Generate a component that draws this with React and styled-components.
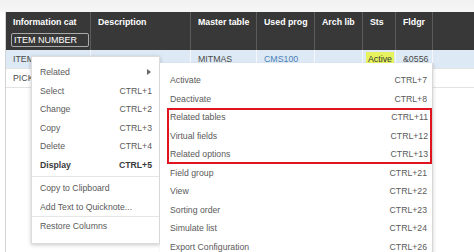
import styled, { createGlobalStyle } from 'styled-components';

const GlobalStyle = createGlobalStyle`
  html, body {
    margin: 0;
    padding: 0;
    background: #fff;
    font-family: "Liberation Sans", Arial, sans-serif;
    overflow: hidden;
  }
`;

const columns = [
  { title: 'Information cat', width: 85 },
  { title: 'Description', width: 100 },
  { title: 'Master table', width: 66 },
  { title: 'Used prog', width: 58 },
  { title: 'Arch lib', width: 48 },
  { title: 'Sts', width: 33 },
  { title: 'Fldgr', width: 37 },
  { title: '', width: null },
];

const gridTemplate = columns.map((c) => (c.width ? `${c.width}px` : '1fr')).join(' ');

const mainMenu = [
  { label: 'Related', sub: true },
  { label: 'Select', key: 'CTRL+1' },
  { label: 'Change', key: 'CTRL+2' },
  { label: 'Copy', key: 'CTRL+3' },
  { label: 'Delete', key: 'CTRL+4' },
  { label: 'Display', key: 'CTRL+5', bold: true },
];

const subBefore = [
  { label: 'Activate', key: 'CTRL+7' },
  { label: 'Deactivate', key: 'CTRL+8' },
];
const subMarked = [
  { label: 'Related tables', key: 'CTRL+11' },
  { label: 'Virtual fields', key: 'CTRL+12' },
  { label: 'Related options', key: 'CTRL+13' },
];
const subAfter = [
  { label: 'Field group', key: 'CTRL+21' },
  { label: 'View', key: 'CTRL+22' },
  { label: 'Sorting order', key: 'CTRL+23' },
  { label: 'Simulate list', key: 'CTRL+24' },
  { label: 'Export Configuration', key: 'CTRL+26' },
];

const App = () => {
  return (
    <>
      <GlobalStyle />
      <Page>
        <Frame>
          <HeaderRow>
            {columns.map((c, i) => (
              <HeadCell key={i}>
                {c.title}
                {i === 0 && <FilterBox>ITEM NUMBER</FilterBox>}
              </HeadCell>
            ))}
          </HeaderRow>
          <Row $tint>
            <Cell>ITEM</Cell>
            <Cell />
            <Cell>MITMAS</Cell>
            <Cell $link>CMS100</Cell>
            <Cell />
            <Cell>
              <Badge>Active</Badge>
            </Cell>
            <Cell>&amp;0556</Cell>
            <Cell />
          </Row>
          <Row>
            <Cell>PICK</Cell>
            <Cell />
            <Cell />
            <Cell />
            <Cell />
            <Cell />
            <Cell />
            <Cell />
          </Row>
        </Frame>

        <ContextMenu>
          {mainMenu.map((m) => (
            <MenuItem key={m.label} $bold={m.bold}>
              <span>{m.label}</span>
              {m.sub ? <Arrow /> : <span>{m.key}</span>}
            </MenuItem>
          ))}
          <Divider />
          <MenuItem>
            <span>Copy to Clipboard</span>
          </MenuItem>
          <MenuItem>
            <span>Add Text to Quicknote...</span>
          </MenuItem>
          <MenuItem $ruled>
            <span>Restore Columns</span>
          </MenuItem>
        </ContextMenu>

        <SubMenu>
          {subBefore.map((m) => (
            <SubItem key={m.label}>
              <span>{m.label}</span>
              <span>{m.key}</span>
            </SubItem>
          ))}
          <Marked>
            {subMarked.map((m) => (
              <SubItem key={m.label} $inset>
                <span>{m.label}</span>
                <span>{m.key}</span>
              </SubItem>
            ))}
          </Marked>
          {subAfter.map((m) => (
            <SubItem key={m.label}>
              <span>{m.label}</span>
              <span>{m.key}</span>
            </SubItem>
          ))}
        </SubMenu>
      </Page>
    </>
  );
};

export default App;

const Page = styled.div`
  position: relative;
  width: 474px;
  height: 252px;
  overflow: hidden;
  padding: 12px 0 0 5px;
  box-sizing: border-box;
  background: linear-gradient(#f1f1f1, #f6f6f6 12px, #fff 12px);
`;

const Frame = styled.div`
  border-left: 1px solid #d2d2d2;
  height: 100%;
  background: #fff;
`;

const HeaderRow = styled.div`
  display: grid;
  grid-template-columns: ${gridTemplate};
  height: 38px;
  background: #383838;
`;

const HeadCell = styled.div`
  border-right: 1px solid #5a5a5a;
  padding: 5px 0 0 7px;
  color: #fff;
  font-weight: bold;
  font-size: 8.8px;
  line-height: 11px;
  white-space: nowrap;
  &:last-child {
    border-right: none;
  }
`;

const FilterBox = styled.div`
  margin: 5px 0 0 -2px;
  width: 74px;
  height: 12px;
  border: 1px solid #a9a9a9;
  border-radius: 2px;
  color: #fff;
  font-weight: normal;
  font-size: 9px;
  line-height: 12px;
  padding-left: 2px;
`;

const Row = styled.div`
  display: grid;
  grid-template-columns: ${gridTemplate};
  height: 18px;
  background: ${({ $tint }) => ($tint ? '#dde9f4' : '#fff')};
  border-bottom: 1px solid #e3e3e3;
`;

const Cell = styled.div`
  border-right: 1px solid #f4f8fc;
  padding-left: 7px;
  font-size: 8.8px;
  line-height: 18px;
  color: ${({ $link }) => ($link ? '#4a7fbb' : '#4a4a4a')};
  white-space: nowrap;
  &:last-child {
    border-right: none;
  }
`;

const Badge = styled.span`
  display: inline-block;
  margin-left: -4px;
  padding: 0 2px;
  line-height: 14px;
  background: #e6f35e;
  color: #333;
`;

const ContextMenu = styled.div`
  position: absolute;
  left: 31px;
  top: 56px;
  width: 129px;
  padding: 6px 0 7px;
  box-sizing: border-box;
  background: #fff;
  border: 1px solid #dcdcdc;
  box-shadow: 0 1px 4px rgba(0, 0, 0, 0.22);
  z-index: 2;
`;

const MenuItem = styled.div`
  display: flex;
  justify-content: space-between;
  align-items: center;
  height: 18.5px;
  padding: 0 7px 0 8px;
  font-size: 8.7px;
  color: ${({ $bold }) => ($bold ? '#3a3a3a' : '#5a5a5a')};
  font-weight: ${({ $bold }) => ($bold ? 'bold' : 'normal')};
  white-space: nowrap;
  border-top: ${({ $ruled }) => ($ruled ? '1px solid #e6e6e6' : 'none')};
`;

const Arrow = styled.span`
  width: 0;
  height: 0;
  margin-right: 1px;
  border-top: 3px solid transparent;
  border-bottom: 3px solid transparent;
  border-left: 4px solid #666;
`;

const Divider = styled.div`
  height: 1px;
  margin: 2px 0 2px;
  background: #e6e6e6;
`;

const SubMenu = styled.div`
  position: absolute;
  left: 160px;
  top: 63px;
  width: 273px;
  padding-top: 8px;
  box-sizing: border-box;
  height: 200px;
  background: #fff;
  border-right: 1px solid #d8d8d8;
  box-shadow: 1px 1px 3px rgba(0, 0, 0, 0.12);
  z-index: 3;
`;

const SubItem = styled.div`
  display: flex;
  justify-content: space-between;
  align-items: center;
  height: 18.5px;
  padding: ${({ $inset }) => ($inset ? '0 2px 0 1px' : '0 5px 0 10px')};
  font-size: 8.7px;
  color: #5a5a5a;
  white-space: nowrap;
`;

const Marked = styled.div`
  margin: 0 0 0 7px;
  box-shadow: inset 0 0 0 2px #e0141e;
  padding: 0 2px;
`;
